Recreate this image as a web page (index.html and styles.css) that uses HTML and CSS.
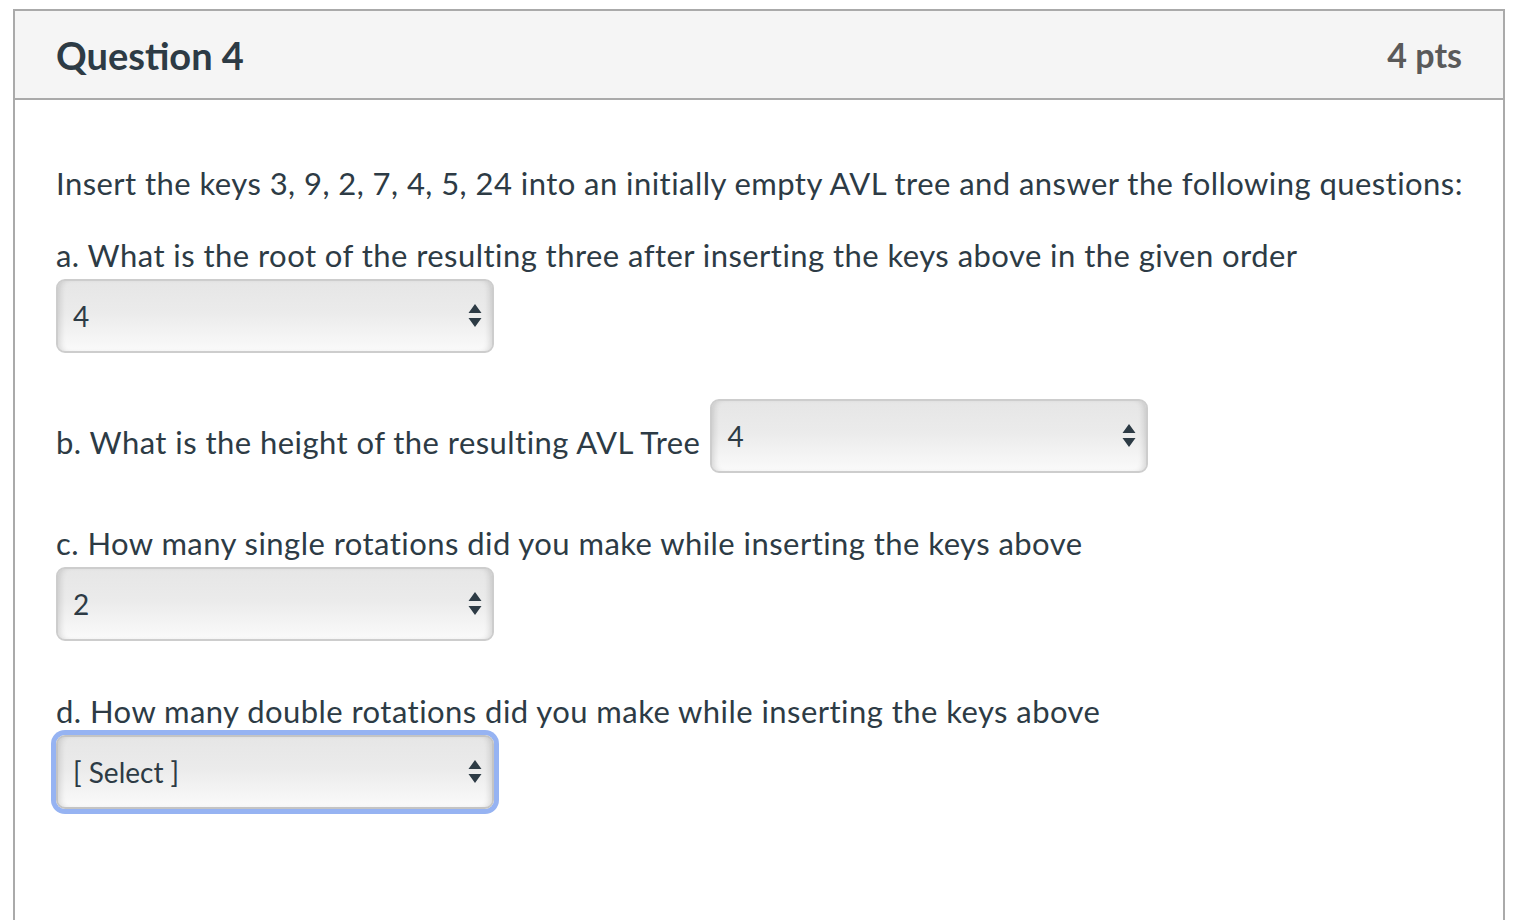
FILE: index.html
```html
<!DOCTYPE html>
<html lang="en">
<head>
<meta charset="utf-8">
<title>Question 4</title>
<link rel="stylesheet" href="styles.css">
</head>
<body>
<div class="page">
  <div class="card">
    <div class="card-header">
      <h2 class="title">Question 4</h2>
      <div class="pts">4 pts</div>
    </div>
    <div class="card-body">
      <p class="intro">Insert the keys 3, 9, 2, 7, 4, 5, 24 into an initially empty AVL tree and answer the following questions:</p>
      <div class="q q-a">
        <span class="label">a. What is the root of the resulting three after inserting the keys above in the given order</span>
        <div class="select"><span class="val">4</span><svg class="arrows" viewBox="0 0 14 24" width="14" height="24"><path d="M7 0 L13.5 9 L0.5 9 Z M0.5 14 L13.5 14 L7 23 Z" fill="#2d3b45"/></svg></div>
      </div>
      <div class="q q-b">
        <span class="label">b. What is the height of the resulting AVL Tree</span>
        <div class="select"><span class="val">4</span><svg class="arrows" viewBox="0 0 14 24" width="14" height="24"><path d="M7 0 L13.5 9 L0.5 9 Z M0.5 14 L13.5 14 L7 23 Z" fill="#2d3b45"/></svg></div>
      </div>
      <div class="q q-c">
        <span class="label">c. How many single rotations did you make while inserting the keys above</span>
        <div class="select"><span class="val">2</span><svg class="arrows" viewBox="0 0 14 24" width="14" height="24"><path d="M7 0 L13.5 9 L0.5 9 Z M0.5 14 L13.5 14 L7 23 Z" fill="#2d3b45"/></svg></div>
      </div>
      <div class="q q-d">
        <span class="label">d. How many double rotations did you make while inserting the keys above</span>
        <div class="select focused"><span class="val">[ Select ]</span><svg class="arrows" viewBox="0 0 14 24" width="14" height="24"><path d="M7 0 L13.5 9 L0.5 9 Z M0.5 14 L13.5 14 L7 23 Z" fill="#2d3b45"/></svg></div>
      </div>
    </div>
  </div>
</div>
</body>
</html>
```

FILE: styles.css
```css
html, body {
  margin: 0;
  padding: 0;
  background: #ffffff;
}
body {
  font-family: Lato, "Open Sans", "Liberation Sans", sans-serif;
  color: #2d3b45;
  overflow: hidden;
}
.page {
  padding: 9px 14px 0 13px;
}
.card {
  border: 2px solid #aaaaaa;
  height: 920px;
  box-sizing: border-box;
}
.card-header {
  background: #f5f5f5;
  border-bottom: 2px solid #aaaaaa;
  height: 89px;
  box-sizing: border-box;
  display: flex;
  align-items: center;
  justify-content: space-between;
  padding: 0 41px 0 41px;
}
.title {
  margin: 0;
  font-size: 38px;
  font-weight: 700;
  color: #2d3b45;
}
.pts {
  font-size: 34px;
  font-weight: 700;
  color: #5a5a5a;
}
.card-body {
  padding: 61px 20px 0 41px;
  font-size: 31px;
  letter-spacing: 0.45px;
}
.intro {
  margin: 0 0 28px 0;
  line-height: 44px;
  white-space: nowrap;
}
.q {
  display: flex;
  flex-wrap: wrap;
  align-items: center;
  column-gap: 10px;
  row-gap: 2px;
  line-height: 44px;
}
.q-a { margin-bottom: 46px; }
.q-b { margin-bottom: 48px; }
.q-c { margin-bottom: 48px; }
.q-b .label { margin-top: 12px; }
.select {
  width: 438px;
  height: 74px;
  flex: none;
  box-sizing: border-box;
  border: 2px solid #cdcdcd;
  border-radius: 9px;
  background: linear-gradient(#e6e6e6, #ebebeb 45%, #fafafa);
  box-shadow: inset 6px 0 6px -4px rgba(0,0,0,0.14), inset -6px 0 6px -4px rgba(0,0,0,0.14);
  display: flex;
  align-items: center;
  justify-content: space-between;
  padding: 0 10px 0 15px;
  font-size: 28px;
  letter-spacing: 0;
  color: #2d3b45;
}
.select.focused {
  border-color: #c4c4c4;
  box-shadow: 0 0 0 5px #96b3f2, inset 6px 0 6px -4px rgba(0,0,0,0.14), inset -6px 0 6px -4px rgba(0,0,0,0.14);
}
.arrows {
  display: block;
}
```
